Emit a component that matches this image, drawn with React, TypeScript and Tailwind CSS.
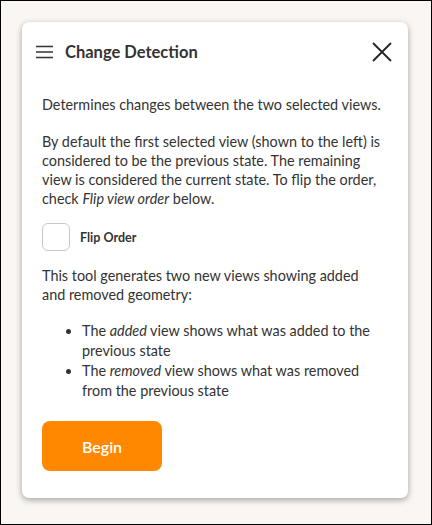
import React, { useState } from 'react'

const font = { fontFamily: 'Lato, "Open Sans", sans-serif' }

export default function App() {
  const [flip, setFlip] = useState(false)

  return (
    <div
      className="h-[525px] w-[432px] border border-black bg-[#f9f6f3] p-[21px] text-[#333333]"
      style={font}
    >
      <div className="h-[476px] w-[386px] rounded-[7px] bg-white shadow-[0_2px_6px_rgba(0,0,0,0.35)]">
        {/* header */}
        <div className="flex h-[60px] items-center pl-[14px] pr-[16px]">
          <svg width="17" height="14" viewBox="0 0 17 14" className="text-[#333333]">
            <path d="M0 1.5h17M0 7h17M0 12.5h17" stroke="currentColor" strokeWidth="1.6" />
          </svg>
          <h1 className="ml-[12px] text-[16.5px] font-bold text-[#333333]">Change Detection</h1>
          <button className="ml-auto flex h-[20px] w-[20px] items-center justify-center">
            <svg width="20" height="20" viewBox="0 0 20 20">
              <path d="M1 1l18 18M19 1L1 19" stroke="#222" strokeWidth="1.8" />
            </svg>
          </button>
        </div>

        <div className="px-[20px] pt-[13px] text-[14.4px] leading-[19px]">
          <p className="whitespace-nowrap">Determines changes between the two selected views.</p>
          <p className="mt-[18px] whitespace-nowrap">
            By default the first selected view (shown to the left) is
            <br />
            considered to be the previous state. The remaining
            <br />
            view is considered the current state. To flip the order,
            <br />
            check <em>Flip view order</em> below.
          </p>

          <label className="mt-[15px] flex items-center">
            <input
              type="checkbox"
              checked={flip}
              onChange={() => setFlip(!flip)}
              className="h-[28px] w-[28px] appearance-none rounded-[6px] border border-[#c8c8c8] bg-white checked:bg-[#ff8800]"
            />
            <span className="ml-[10px] text-[12.5px] font-bold">Flip Order</span>
          </label>

          <p className="mt-[15px] whitespace-nowrap">
            This tool generates two new views showing added
            <br />
            and removed geometry:
          </p>

          <ul className="mt-[17px] list-disc whitespace-nowrap pl-[40px] leading-[20px]">
            <li>
              The <em>added</em> view shows what was added to the
              <br />
              previous state
            </li>
            <li>
              The <em>removed</em> view shows what was removed
              <br />
              from the previous state
            </li>
          </ul>

          <button className="mt-[20px] h-[50px] w-[120px] rounded-[8px] bg-[#ff8800] text-[16px] font-semibold text-white">
            Begin
          </button>
        </div>
      </div>
    </div>
  )
}
